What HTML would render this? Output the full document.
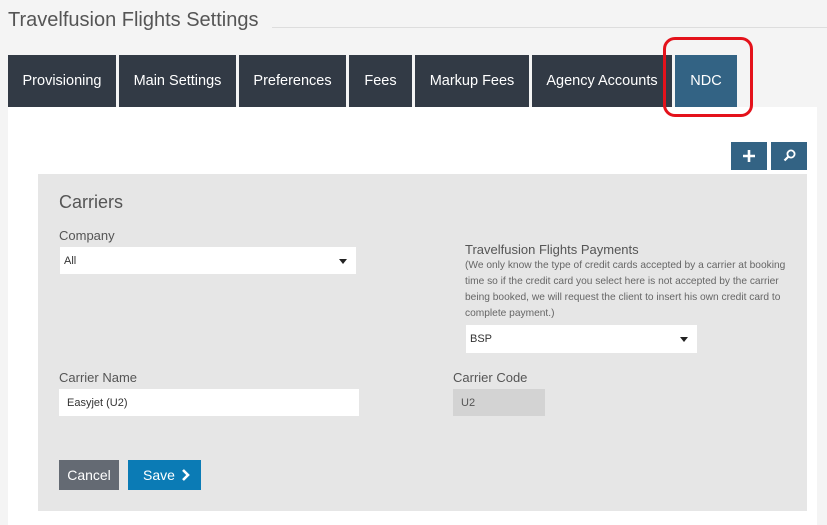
<!DOCTYPE html>
<html><head><meta charset="utf-8">
<style>
*{margin:0;padding:0;box-sizing:border-box}
body{width:827px;height:525px;background:#f4f4f4;font-family:"Liberation Sans",Arial,sans-serif;position:relative;overflow:hidden;color:#555}
.a{position:absolute}
.tab{position:absolute;top:55px;height:52px;background:#323a45;color:#fff;font-size:14.5px;display:flex;align-items:center;justify-content:center}
.sel{position:absolute;background:#fff;font-size:11px;color:#333;padding-left:4px;display:flex;align-items:center}
.car{position:absolute;right:9px;top:50%;margin-top:-2px;width:0;height:0;border-left:4px solid transparent;border-right:4px solid transparent;border-top:5px solid #222}
.lbl{position:absolute;font-size:13px;color:#555}
</style></head><body>
<div class="a" style="left:8px;top:9px;font-size:20px;color:#555">Travelfusion Flights Settings</div>
<div class="a" style="left:272px;top:27px;width:555px;height:1px;background:#ddd"></div>
<div class="a" style="left:8px;top:107px;width:809px;height:418px;background:#fff"></div>
<div class="tab" style="left:8px;width:108px">Provisioning</div>
<div class="tab" style="left:119px;width:117px">Main Settings</div>
<div class="tab" style="left:239px;width:107px">Preferences</div>
<div class="tab" style="left:349px;width:63px">Fees</div>
<div class="tab" style="left:415px;width:114px">Markup Fees</div>
<div class="tab" style="left:532px;width:140px">Agency Accounts</div>
<div class="tab" style="left:675px;width:62px;background:#336384">NDC</div>
<div class="a" style="left:663px;top:37px;width:90px;height:80px;border:3px solid #e4121b;border-radius:12px"></div>
<div class="a" style="left:731px;top:142px;width:36px;height:28px;background:#336384">
<svg width="36" height="28"><path d="M18 8v12M12 14h12" stroke="#fff" stroke-width="2.6"/></svg></div>
<div class="a" style="left:771px;top:142px;width:36px;height:28px;background:#336384">
<svg width="36" height="28"><circle cx="20" cy="12" r="3.6" fill="none" stroke="#fff" stroke-width="1.8"/><path d="M17.5 14.5l-4 4" stroke="#fff" stroke-width="2.2"/></svg></div>
<div class="a" style="left:38px;top:174px;width:769px;height:337px;background:#e6e6e6"></div>
<div class="a" style="left:59px;top:192px;font-size:18px;color:#555">Carriers</div>
<div class="lbl" style="left:59px;top:228px">Company</div>
<div class="sel" style="left:60px;top:247px;width:296px;height:27px">All<span class="car"></span></div>
<div class="lbl" style="left:465px;top:242px">Travelfusion Flights Payments</div>
<div class="a" style="left:465px;top:258px;width:340px;font-size:10.2px;line-height:16px;color:#666;white-space:nowrap">(We only know the type of credit cards accepted by a carrier at booking<br>time so if the credit card you select here is not accepted by the carrier<br>being booked, we will request the client to insert his own credit card to<br>complete payment.)</div>
<div class="sel" style="left:466px;top:325px;width:231px;height:28px">BSP<span class="car"></span></div>
<div class="lbl" style="left:59px;top:370px">Carrier Name</div>
<div class="sel" style="left:59px;top:389px;width:300px;height:27px;padding-left:8px">Easyjet (U2)</div>
<div class="lbl" style="left:453px;top:370px">Carrier Code</div>
<div class="sel" style="left:453px;top:389px;width:92px;height:27px;background:#d3d3d3;padding-left:8px;color:#555">U2</div>
<div class="a" style="left:59px;top:460px;width:60px;height:30px;background:#646a73;color:#fff;font-size:14px;display:flex;align-items:center;justify-content:center">Cancel</div>
<div class="a" style="left:128px;top:460px;width:73px;height:30px;background:#0b7bb5;color:#fff;font-size:14px;display:flex;align-items:center;padding-left:15px">Save
<svg width="12" height="14" style="margin-left:5px"><path d="M3 2l5 5-5 5" fill="none" stroke="#fff" stroke-width="2.6"/></svg></div>
</body></html>
